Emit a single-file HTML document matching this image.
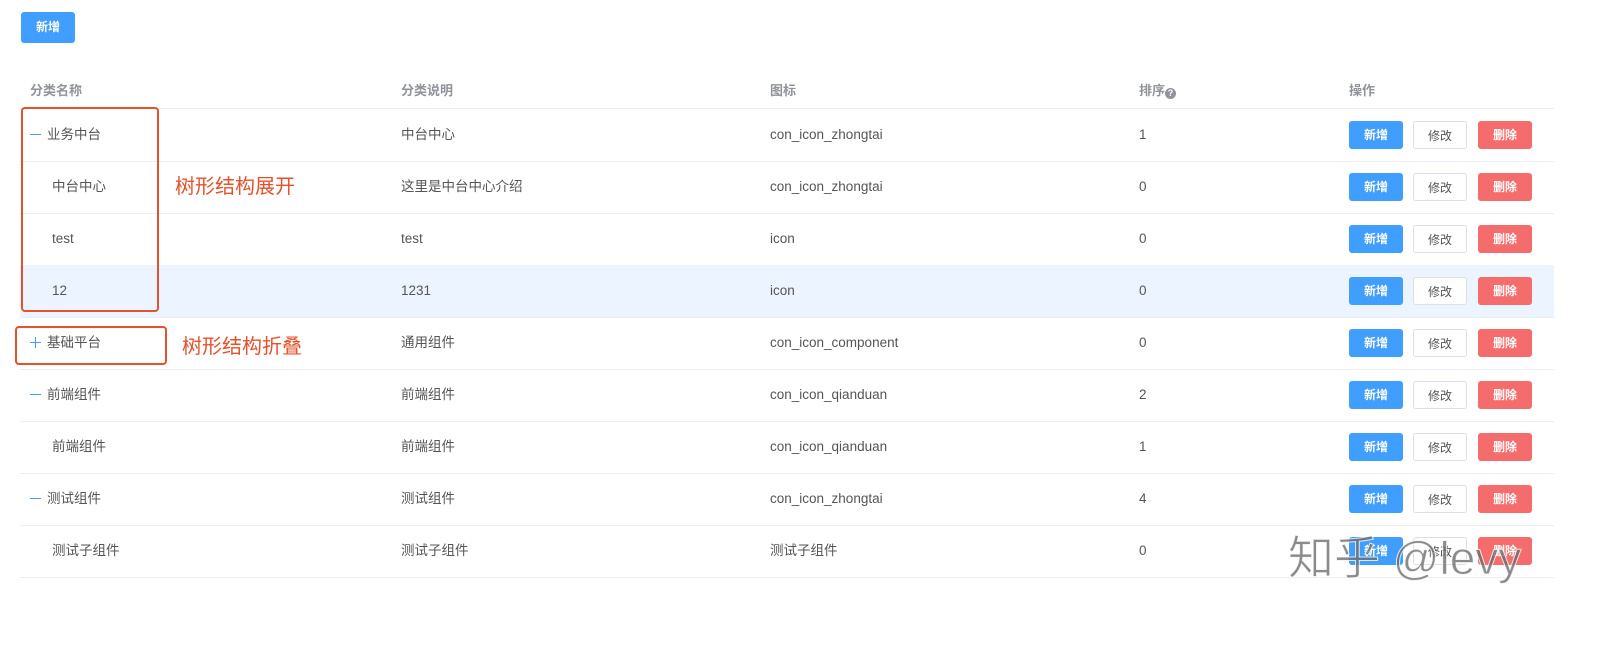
<!DOCTYPE html>
<html><head><meta charset="utf-8"><style>
body{margin:0;width:1603px;height:645px;background:#fff;position:relative;overflow:hidden;font-family:"Liberation Sans","Noto Sans CJK SC",sans-serif;color:#555;font-size:13.5px}
.a{position:absolute}
.row{position:absolute;left:20px;width:1534px;height:52px;border-bottom:1px solid #ebeef5}
.c{position:absolute;top:0;line-height:52px;white-space:nowrap}
.b{position:absolute;top:12px;width:54px;height:28px;border-radius:3px;line-height:28px;text-align:center;font-size:12px;box-sizing:border-box}
.p{background:#409eff;color:#fff;font-weight:bold}
.w{background:#fff;border:1px solid #dcdfe6;color:#555}
.d{background:#f56c6c;color:#fff;font-weight:bold}
.mi{display:inline-block;width:11px;height:1px;background:#409eff;vertical-align:middle;margin-right:6px;position:relative;top:-1px}
.pl{display:inline-block;width:11px;height:11px;position:relative;vertical-align:middle;margin-right:6px;top:-1px}
.pl:before{content:"";position:absolute;left:0;top:5px;width:11px;height:1px;background:#409eff}
.pl:after{content:"";position:absolute;left:5px;top:0;width:1px;height:11px;background:#409eff}
.h{position:absolute;top:80px;color:#909399;font-weight:bold;font-size:13px}
.red{position:absolute;border:2px solid #e4522c;border-radius:4px;box-sizing:border-box}
.lab{position:absolute;color:#e4522c;font-size:20px;line-height:20px}
</style></head><body>
<div class="a b p" style="left:21px;top:12px;height:31px;line-height:31px">新增</div>
<div class="a" style="left:20px;top:108px;width:1534px;border-top:1px solid #ebeef5"></div>
<div class="h" style="left:30px">分类名称</div>
<div class="h" style="left:401px">分类说明</div>
<div class="h" style="left:770px">图标</div>
<div class="h" style="left:1139px">排序<span style="display:inline-block;width:11px;height:11px;border-radius:50%;background:#909399;color:#fff;font-size:9px;line-height:11px;text-align:center;vertical-align:-1px">?</span></div>
<div class="h" style="left:1349px">操作</div>

<div class="row" style="top:109px"><div class="c" style="left:10px"><span class="mi"></span>业务中台</div><div class="c" style="left:381px">中台中心</div><div class="c" style="left:750px">con_icon_zhongtai</div><div class="c" style="left:1119px">1</div><div class="b p" style="left:1329px">新增</div><div class="b w" style="left:1393px">修改</div><div class="b d" style="left:1458px">删除</div></div>
<div class="row" style="top:161px"><div class="c" style="left:32px">中台中心</div><div class="c" style="left:381px">这里是中台中心介绍</div><div class="c" style="left:750px">con_icon_zhongtai</div><div class="c" style="left:1119px">0</div><div class="b p" style="left:1329px">新增</div><div class="b w" style="left:1393px">修改</div><div class="b d" style="left:1458px">删除</div></div>
<div class="row" style="top:213px"><div class="c" style="left:32px">test</div><div class="c" style="left:381px">test</div><div class="c" style="left:750px">icon</div><div class="c" style="left:1119px">0</div><div class="b p" style="left:1329px">新增</div><div class="b w" style="left:1393px">修改</div><div class="b d" style="left:1458px">删除</div></div>
<div class="row" style="top:265px;background:#ecf5ff"><div class="c" style="left:32px">12</div><div class="c" style="left:381px">1231</div><div class="c" style="left:750px">icon</div><div class="c" style="left:1119px">0</div><div class="b p" style="left:1329px">新增</div><div class="b w" style="left:1393px">修改</div><div class="b d" style="left:1458px">删除</div></div>
<div class="row" style="top:317px"><div class="c" style="left:10px"><span class="pl"></span>基础平台</div><div class="c" style="left:381px">通用组件</div><div class="c" style="left:750px">con_icon_component</div><div class="c" style="left:1119px">0</div><div class="b p" style="left:1329px">新增</div><div class="b w" style="left:1393px">修改</div><div class="b d" style="left:1458px">删除</div></div>
<div class="row" style="top:369px"><div class="c" style="left:10px"><span class="mi"></span>前端组件</div><div class="c" style="left:381px">前端组件</div><div class="c" style="left:750px">con_icon_qianduan</div><div class="c" style="left:1119px">2</div><div class="b p" style="left:1329px">新增</div><div class="b w" style="left:1393px">修改</div><div class="b d" style="left:1458px">删除</div></div>
<div class="row" style="top:421px"><div class="c" style="left:32px">前端组件</div><div class="c" style="left:381px">前端组件</div><div class="c" style="left:750px">con_icon_qianduan</div><div class="c" style="left:1119px">1</div><div class="b p" style="left:1329px">新增</div><div class="b w" style="left:1393px">修改</div><div class="b d" style="left:1458px">删除</div></div>
<div class="row" style="top:473px"><div class="c" style="left:10px"><span class="mi"></span>测试组件</div><div class="c" style="left:381px">测试组件</div><div class="c" style="left:750px">con_icon_zhongtai</div><div class="c" style="left:1119px">4</div><div class="b p" style="left:1329px">新增</div><div class="b w" style="left:1393px">修改</div><div class="b d" style="left:1458px">删除</div></div>
<div class="row" style="top:525px"><div class="c" style="left:32px">测试子组件</div><div class="c" style="left:381px">测试子组件</div><div class="c" style="left:750px">测试子组件</div><div class="c" style="left:1119px">0</div><div class="b p" style="left:1329px">新增</div><div class="b w" style="left:1393px">修改</div><div class="b d" style="left:1458px">删除</div></div>

<div class="red" style="left:21px;top:107px;width:138px;height:205px"></div>
<div class="red" style="left:15px;top:326px;width:152px;height:39px"></div>
<div class="lab" style="left:175px;top:177px">树形结构展开</div>
<div class="lab" style="left:182px;top:337px">树形结构折叠</div>
<div class="a" style="left:1288px;top:528px;font-size:46px;line-height:60px;color:rgba(110,110,110,0.8);-webkit-text-stroke:1px rgba(255,255,255,0.8);white-space:nowrap">知乎 @levy</div>
</body></html>
